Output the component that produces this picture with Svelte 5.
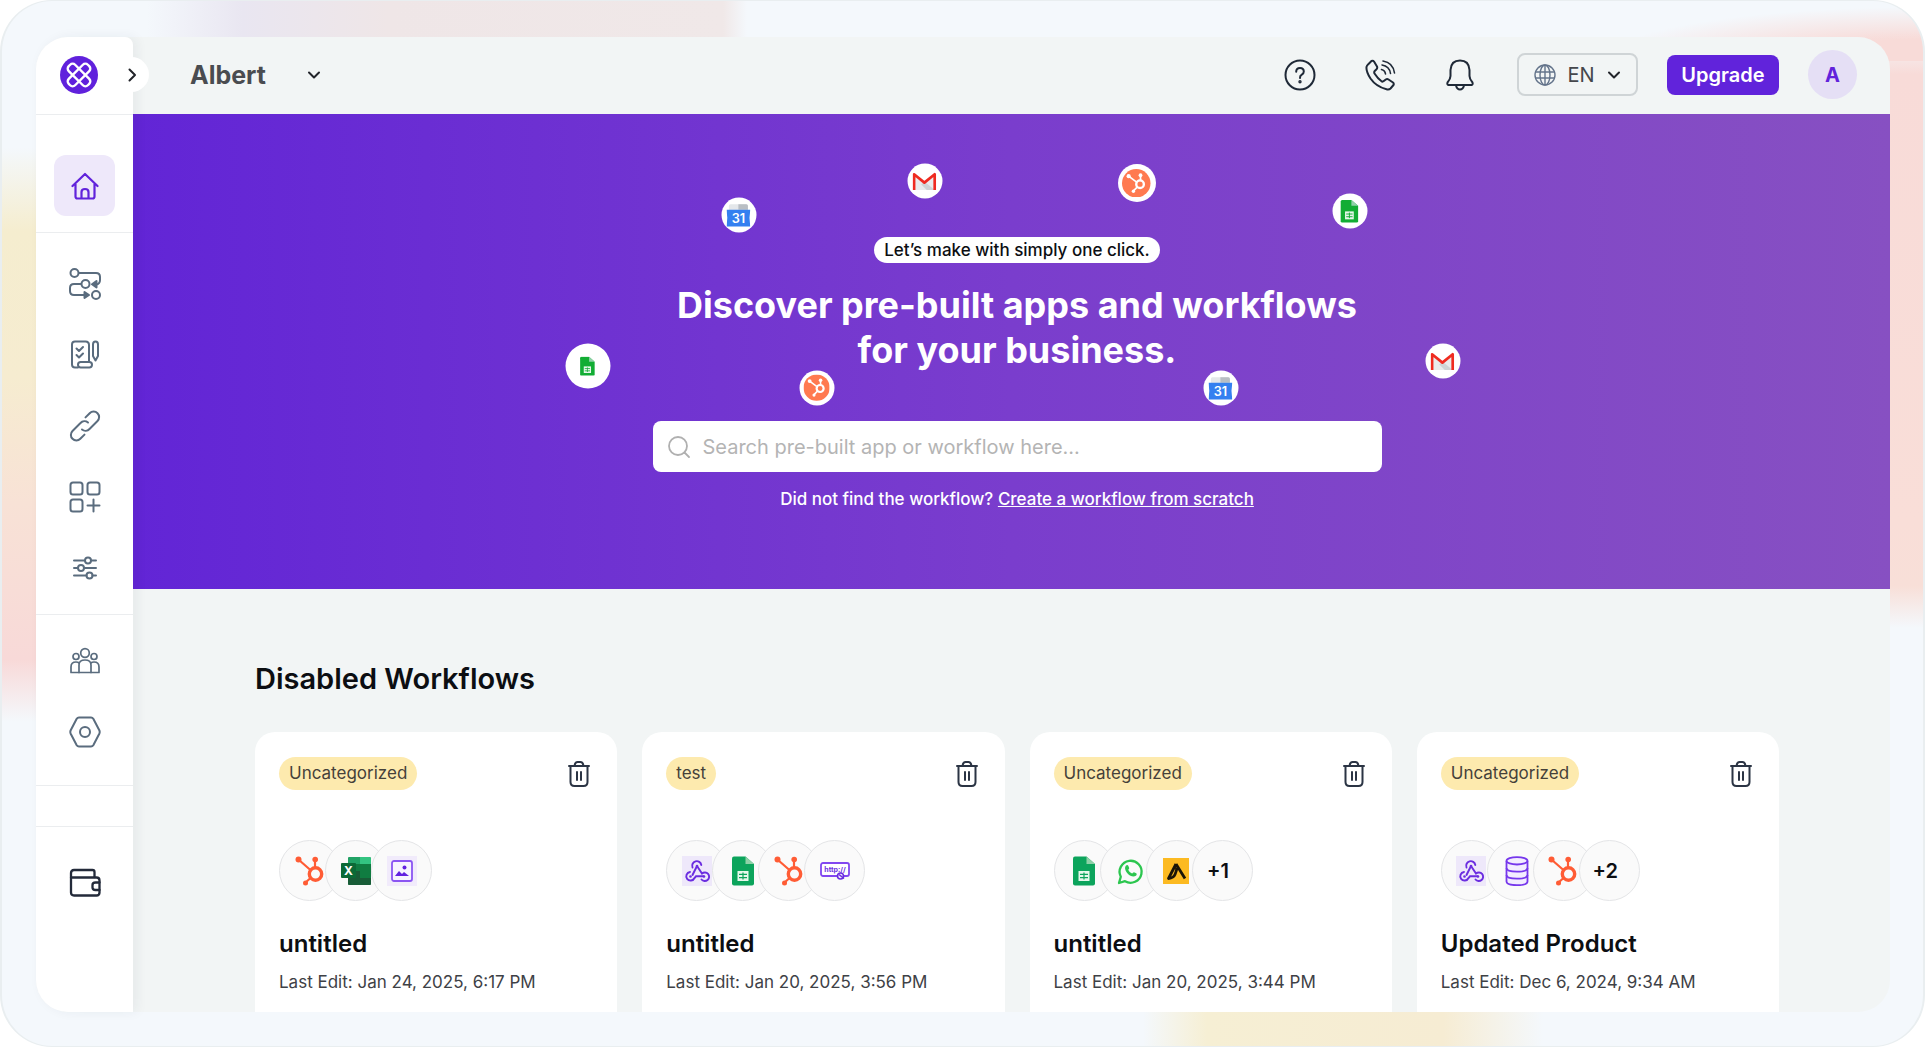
<script>
	const floating = [
		{ icon: 'calendar', x: -273, y: 101, size: 35 },
		{ icon: 'gmail', x: -87, y: 67, size: 35 },
		{ icon: 'hubspot-badge', x: 125, y: 69, size: 38 },
		{ icon: 'sheets', x: 338, y: 97, size: 35 },
		{ icon: 'sheets', x: -424, y: 252, size: 45 },
		{ icon: 'hubspot-badge', x: -195, y: 274, size: 35 },
		{ icon: 'calendar', x: 209, y: 274, size: 35 },
		{ icon: 'gmail', x: 431, y: 247, size: 35 },
	];

	const workflows = [
		{ tag: 'Uncategorized', apps: ['hubspot', 'excel', 'image'], more: 0, title: 'untitled', edited: 'Jan 24, 2025, 6:17 PM' },
		{ tag: 'test', apps: ['webhook', 'sheets-dark', 'hubspot', 'http'], more: 0, title: 'untitled', edited: 'Jan 20, 2025, 3:56 PM' },
		{ tag: 'Uncategorized', apps: ['sheets-dark', 'whatsapp', 'apollo'], more: 1, title: 'untitled', edited: 'Jan 20, 2025, 3:44 PM' },
		{ tag: 'Uncategorized', apps: ['webhook', 'database', 'hubspot'], more: 2, title: 'Updated Product', edited: 'Dec 6, 2024, 9:34 AM' },
	];

	const navGroups = [
		{ name: 'build', items: ['Workflows', 'Tasks', 'Connections', 'Apps', 'Settings'] },
		{ name: 'team', items: ['Team', 'Preferences'] },
		{ name: 'empty', items: [] },
		{ name: 'billing', items: ['Billing'] },
	];

	let query = $state('');
</script>

{#snippet chevron()}
	<svg class="chevron" viewBox="0 0 14 14" width="14" height="14" aria-hidden="true">
		<path d="M2 4.500l5 5 5-5" />
	</svg>
{/snippet}

{#snippet navIcon(name)}
	<svg class="nav-icon" viewBox="0 0 32 32" width="32" height="32" aria-hidden="true">
		{#if name === 'Workflows'}
			<circle cx="5.500" cy="5" r="4" />
			<path d="M10 5h17q4 0 4 4v3q0 4-4 4.500" />
			<path d="M27.500 13l-4.500 3.300 4.500 3.200z" fill="currentColor" />
			<circle cx="16.500" cy="16" r="4" />
			<path d="M12 16H5q-4 0-4 4v3q0 4 4 4h11" />
			<path d="M15.500 24l4.500 3-4.500 3z" fill="currentColor" />
			<circle cx="27" cy="27" r="4" />
		{:else if name === 'Tasks'}
			<path d="M9 28.500H6q-3 0-3-3V5.500q0-3 3-3h10.500q3.500 0 3.500 3.500v16.500" />
			<rect x="9" y="23" width="14" height="5.500" rx="2.700" />
			<path d="M7.500 9.500l2.500 2.500 4-4M7.500 16l2.500 2.500 4-4" />
			<path d="M24 5.500q0-3 2.500-3t2.500 3V17l-2.500 4.500L24 17z" />
		{:else if name === 'Connections'}
			<path d="M13 19.500a5.500 5.500 0 0 0 7.500-.500l8-8a5.500 5.500 0 0 0-7.800-7.800l-4.200 4.200" />
			<path d="M19 12.500a5.500 5.500 0 0 0-7.500.500l-8 8a5.500 5.500 0 0 0 7.800 7.800l4.200-4.200" />
		{:else if name === 'Apps'}
			<rect x="1.500" y="1.500" width="12" height="12" rx="2.500" />
			<rect x="18.500" y="1.500" width="12" height="12" rx="2.500" />
			<rect x="1.500" y="18.500" width="12" height="12" rx="2.500" />
			<path d="M24.500 18.500v12M18.500 24.500h12" />
		{:else if name === 'Settings'}
			<path d="M5 8.500h11M22 8.500h5M5 16h4M15 16h12M5 23.500h12.500M23.500 23.500h3.500" />
			<circle cx="19" cy="8.500" r="3" />
			<circle cx="12" cy="16" r="3" />
			<circle cx="20.500" cy="23.500" r="3" />
		{:else if name === 'Team'}
			<g stroke-width="1.700">
				<circle cx="16" cy="8" r="4.300" />
				<circle cx="7" cy="11.500" r="3" />
				<circle cx="25" cy="11.500" r="3" />
				<path d="M10 27.500V20q0-5 6-5t6 5v7.500z" />
				<path d="M10 27.500H2V22q0-5 5-5 2 0 3.200 1M22 27.500h8V22q0-5-5-5-2 0-3.200 1" />
			</g>
		{:else if name === 'Preferences'}
			<path d="M10 1.500h12q1.500 0 2.300 1.300l6 11.500q.800 1.700 0 3.400l-6 11.500q-.800 1.300-2.300 1.300H10q-1.500 0-2.300-1.300l-6-11.500q-.800-1.700 0-3.400l6-11.500Q8.500 1.500 10 1.500z" />
			<circle cx="16" cy="16" r="5" />
		{:else if name === 'Billing'}
			<g stroke-width="2.300">
				<path d="M2 10.500V6q0-3 3-3h18.500q2 0 2 2v5" />
				<path d="M2 10.500h25.500q3 0 3 3v12q0 3-3 3H5q-3 0-3-3z" />
				<path d="M30.500 15.500h-4q-3 0-3 2.500v2.500q0 2.500 3 2.500h4" />
			</g>
		{/if}
	</svg>
{/snippet}

{#snippet appIcon(name)}
	<svg viewBox="0 0 30 30" aria-hidden="true">
		{#if name === 'hubspot'}
			<g stroke="#ff5c35" fill="none">
				<path d="M4 4l12 10.500M20 4v9M15.500 22l-5.500 5" stroke-width="2.200" />
				<circle cx="20.500" cy="18" r="6.200" stroke-width="3.400" />
			</g>
			<g fill="#ff5c35">
				<circle cx="3.500" cy="3.500" r="3" />
				<circle cx="20.200" cy="3.500" r="2.800" />
				<circle cx="10.500" cy="27" r="2.500" />
			</g>
		{:else if name === 'hubspot-badge'}
			<circle cx="15" cy="15" r="15" fill="#ff7a50" />
			<g stroke="#fff" fill="none">
				<path d="M7 7.500l8 6M19.500 7v6M16 19l-4 4" stroke-width="1.800" />
				<circle cx="19" cy="16" r="4" stroke-width="2.500" />
			</g>
			<g fill="#fff">
				<circle cx="7" cy="7.500" r="2.200" />
				<circle cx="19.500" cy="6.500" r="2" />
				<circle cx="12" cy="23.500" r="1.800" />
			</g>
		{:else if name === 'excel'}
			<rect x="7" y="1" width="23" height="28" rx="1.500" fill="#107c41" />
			<path d="M19 1h9.500Q30 1 30 2.500V8H19z" fill="#33c481" />
			<path d="M7 8V2.500Q7 1 8.500 1H19v7z" fill="#21a366" />
			<path d="M7 15h12v7H7z" fill="#185c37" />
			<path d="M7 22h23v5.500q0 1.500-1.500 1.500h-20Q7 29 7 27.500z" fill="#185c37" />
			<rect x="0" y="7" width="15" height="15" rx="1" fill="#0b6a37" />
			<text x="7.500" y="19" text-anchor="middle" font-size="12" font-weight="700" fill="#fff">X</text>
		{:else if name === 'image'}
			<rect width="30" height="30" fill="#f1ebfb" />
			<rect x="5" y="5" width="20" height="20" rx="2" fill="#f7f3ff" stroke="#8b55f2" stroke-width="1.800" />
			<path d="M8 20l4-5 3 3 2-2 5 4z" fill="#6220e0" />
			<circle cx="17.500" cy="11.500" r="2" fill="#6220e0" />
		{:else if name === 'webhook'}
			<rect width="30" height="30" fill="#eee8fa" />
			<g fill="none" stroke="#6b2de0" stroke-width="1.900" stroke-linecap="round">
				<path d="M10.500 11.500a4.600 4.600 0 1 1 8.800-2.500M15 10l-4.500 9" />
				<path d="M15 10l5 7.500a4.300 4.300 0 1 1-.500 6" />
				<path d="M8 16a4.300 4.300 0 1 0 4.500 6l1.500-1.700h7.500" />
			</g>
			<g fill="#6b2de0">
				<circle cx="15" cy="10" r="1.300" />
				<circle cx="8.500" cy="20.500" r="1.300" />
				<circle cx="22" cy="20.500" r="1.300" />
			</g>
		{:else if name === 'http'}
			<rect x="1" y="7" width="28" height="13" rx="2" fill="#fff" stroke="#8147f0" stroke-width="1.800" />
			<text x="15" y="15.500" text-anchor="middle" font-size="7" font-weight="700" fill="#6b2de0">http://</text>
			<circle cx="20.500" cy="20" r="3" fill="#efe8fb" stroke="#6b2de0" stroke-width="1.600" />
			<path d="M19 18.500l5 4" stroke="#6b2de0" stroke-width="1.600" />
		{:else if name === 'sheets' || name === 'sheets-dark'}
			{@const fill = name === 'sheets' ? '#12ad34' : '#0ca45c'}
			<path d="M6 .500h11.500L26 8v19.500q0 2-2 2H6q-2 0-2-2v-25q0-2 2-2z" {fill} />
			<path d="M17.500.500L26 8h-8.500z" fill="#8fd1a8" />
			<rect x="9.500" y="15" width="11" height="10" fill="#e6f7eb" />
			<path d="M11 18.300h8M11 21.700h8M15 16.500v7" stroke={fill} stroke-width="1.200" />
		{:else if name === 'whatsapp'}
			<path d="M4 27l1.800-6.300A11 11 0 1 1 10 25.200z" fill="none" stroke="#2cc64f" stroke-width="2.300" stroke-linejoin="round" />
			<path d="M11 9.500c1-1 2-.600 2.400.400l.800 2c.200.600-.900 1.600-.900 1.800.700 1.700 2 3 3.800 3.700.400.100 1.300-1.400 1.900-1.200l2.200 1c.900.500.500 1.900-.300 2.500-2.400 1.700-5.700.400-8.100-2-2.200-2.200-3.800-6-1.800-8.200z" fill="#2cc64f" />
		{:else if name === 'apollo'}
			<rect x="2" y="2" width="26" height="26" fill="#fcba22" />
			<path d="M15 8l9 14.500M15 8L7.500 22.500q5-.500 6.500-4t2-7" fill="none" stroke="#1a1508" stroke-width="2.800" stroke-linejoin="round" />
		{:else if name === 'database'}
			<g fill="#f3edff" stroke="#7637ec" stroke-width="1.800">
				<path d="M4.500 5v20.500q0 3.700 10.500 3.700t10.500-3.700V5" />
				<ellipse cx="15" cy="4.800" rx="10.500" ry="3.700" />
				<path d="M4.500 12q0 3.700 10.500 3.700T25.500 12M4.500 19q0 3.700 10.500 3.700T25.500 19" fill="none" />
			</g>
		{:else if name === 'calendar'}
			<path d="M3 9V3q0-2 2-2h20q2 0 2 2v6z" fill="#e4e7ea" />
			<path d="M15 1h10q2 0 2 2v5H15z" fill="#b9bec4" />
			<path d="M0 8h30l-1 10 1 12H0l1-12z" fill="#3480f0" />
			<text x="15" y="24.500" text-anchor="middle" font-size="16" font-weight="600" fill="#fff">31</text>
		{:else if name === 'gmail'}
			<path d="M2 5l13 10L28 5v21H2z" fill="#e9ebec" />
			<path d="M15 15l13 11H18l-7-7z" fill="#cfd3d5" />
			<path d="M2 26V6l13 10.500L28 6v20" fill="none" stroke="#ef2b20" stroke-width="3.400" stroke-linejoin="round" />
		{/if}
	</svg>
{/snippet}

<div class="frame">
	<div class="panel">
		<aside class="sidebar">
			<a class="logo" href="#top" aria-label="Dashboard">
				<svg viewBox="0 0 38 38" width="38" height="38">
					<circle cx="19" cy="19" r="19" fill="#6021dc" />
					<g fill="none" stroke="#fff" stroke-width="2.400">
						<rect x="5.500" y="14.500" width="27" height="9" rx="3.500" transform="rotate(45 19 19)" />
						<rect x="5.500" y="14.500" width="27" height="9" rx="3.500" transform="rotate(-45 19 19)" />
					</g>
				</svg>
			</a>
			<button class="toggle" aria-label="Expand menu">
				<svg class="chevron" viewBox="0 0 14 14" width="14" height="14"><path d="M4.500 1.500L10 7l-5.500 5.500" /></svg>
			</button>

			<nav>
				<div class="group home-group">
					<a class="home" href="#home" aria-label="Home">
						<svg viewBox="0 0 28 28" width="28" height="28">
							<path d="M1.500 14L14 2l12.500 12M4.500 12v12.500q0 2 2 2h15q2 0 2-2V12M10.500 26.500V20q0-3 3.500-3t3.500 3v6.500" />
						</svg>
					</a>
				</div>
				{#each navGroups as group}
					<div class="group {group.name}">
						{#each group.items as item}
							<a class="nav-item" href="#{item.toLowerCase()}" aria-label={item}>{@render navIcon(item)}</a>
						{/each}
					</div>
				{/each}
			</nav>
		</aside>

		<div class="content">
			<header class="topbar">
				<label class="workspace">
					<select aria-label="Workspace"><option>Albert</option></select>
					{@render chevron()}
				</label>

				<div class="tools">
					<button class="tool" aria-label="Help">
						<svg viewBox="0 0 32 32" width="32" height="32">
							<circle cx="16" cy="16" r="14.500" />
							<path d="M12.200 12.800q0-3.800 3.800-3.800t3.800 3.500q0 2-2 3.200T16 19" />
							<circle cx="16" cy="22.700" r=".7" />
						</svg>
					</button>
					<button class="tool" aria-label="Call us">
						<svg viewBox="0 0 32 32" width="32" height="32">
							<path d="M4 5.500L7.500 2q1.500-.800 2.500.500l3 5q.700 1.500-.500 2.800l-2 2q-.700 1.200.200 2.500 3.200 5 6.800 7.500 1.200.700 2.300-.200l2-1.600q1.300-.900 2.700 0l4.500 3q1.200 1 .500 2.500l-3 3.500q-1.500 1.500-4 .800Q12 27.500 6.500 19.500 2 12.500 2.500 8q.300-1.500 1.500-2.500z" />
							<path d="M17.500 10.500q3.500.800 4 4.500M18 6q7.500 1.200 8.500 8.500M19 2q10 1.500 11.500 12" stroke-width="1.600" />
						</svg>
					</button>
					<button class="tool" aria-label="Notifications">
						<svg viewBox="0 0 32 32" width="32" height="32">
							<path d="M16 1.500q9 0 9.500 9.500v6q0 3 3 6.500.700 2-1 2.500h-23q-1.700-.500-1-2.500 3-3.500 3-6.500v-6q.500-9.500 9.500-9.500z" />
							<path d="M12 26.500q1 4 4 4t4-4" />
						</svg>
					</button>
				</div>

				<label class="language">
					<svg class="globe" viewBox="0 0 22 22" width="22" height="22" aria-hidden="true">
						<circle cx="11" cy="11" r="10" />
						<ellipse cx="11" cy="11" rx="5" ry="10" />
						<path d="M11 1v20M1.500 8h19M1.500 14h19" />
					</svg>
					<select aria-label="Language"><option>EN</option></select>
					{@render chevron()}
				</label>
				<button class="upgrade">Upgrade</button>
				<button class="avatar" aria-label="Account">A</button>
			</header>

			<section class="hero">
				{#each floating as app}
					<span
						class="bubble"
						style:left="calc(50% + {app.x}px)"
						style:top="{app.y}px"
						style:width="{app.size}px"
						style:height="{app.size}px"
						class:badge={app.icon === 'hubspot-badge'}
						class:roomy={app.size > 40}
					>{@render appIcon(app.icon)}</span>
				{/each}

				<p class="pill">Let’s make with simply one click.</p>
				<h1>Discover pre-built apps and workflows<br />for your business.</h1>
				<label class="search">
					<svg viewBox="0 0 24 24" width="24" height="24" aria-hidden="true">
						<circle cx="11" cy="11" r="9" />
						<path d="M17.500 17.500L22 22" />
					</svg>
					<input type="text" aria-label="Search" placeholder="Search pre-built app or workflow here..." bind:value={query} />
				</label>
				<p class="hint">Did not find the workflow? <a href="#new">Create a workflow from scratch</a></p>
			</section>

			<section class="disabled">
				<h2>Disabled Workflows</h2>
				<div class="cards">
					{#each workflows as flow}
						<article class="card">
							<div class="card-head">
								<span class="tag">{flow.tag}</span>
								<button class="trash" aria-label="Delete workflow">
									<svg viewBox="0 0 22 28" width="22" height="28">
										<path d="M1 6h20M6.500 6q.500-4 3-4h3q2.500 0 3 4M2.500 6v16q0 4 4 4h9q4 0 4-4V6M9 12v8M13 12v8" />
									</svg>
								</button>
							</div>
							<div class="apps">
								{#each flow.apps as app}
									<span class="app">{@render appIcon(app)}</span>
								{/each}
								{#if flow.more}
									<span class="app more">+{flow.more}</span>
								{/if}
							</div>
							<h3>{flow.title}</h3>
							<p class="edited">Last Edit: {flow.edited}</p>
						</article>
					{/each}
				</div>
			</section>
		</div>
	</div>
</div>

<style>
	:global(body) {
		background: #fff;
	}

	* {
		box-sizing: border-box;
	}

	.frame {
		--purple: #6123db;
		--line: #ebedef;
		display: flex;
		min-height: 100vh;
		padding: 36px 33px 34px 34px;
		border: solid #e9eef0;
		border-width: 1px 2px;
		border-radius: 52px;
		font-family: Inter, "Liberation Sans", sans-serif;
		color: #0c0e12;
		background:
			linear-gradient(180deg, transparent 14%, #f5edcf 22%, #f6ecd0 36%, #f8e2d6 48%, #f8d9d8 63%, transparent 69%) left top / 60px 100% no-repeat,
			linear-gradient(180deg, transparent 3%, #f8dbd8 7%, #f9ded8 50%, #f8dfd8 56%, transparent 60%) right top / 60px 100% no-repeat,
			radial-gradient(320px 54px at 100% 100%, #f8dbd8 40%, transparent) right top / 360px 60px no-repeat,
			linear-gradient(90deg, transparent, #e9e6f1 16%, #efe6e7 40%, #f0e8e8 96%, transparent) 11% top / 600px 60px no-repeat,
			linear-gradient(90deg, transparent, #f6efd4 16%, #f6ecd3 75%, transparent) 75% bottom / 400px 60px no-repeat,
			#f4f8fc;
	}

	.panel {
		display: flex;
		flex: 1;
		min-width: 0;
		border-radius: 32px;
		background: #f2f5f5;
	}

	.sidebar {
		position: relative;
		z-index: 1;
		flex: none;
		width: 97px;
		border-radius: 32px 8px 0 32px;
		background: #fff;
		box-shadow: 4px 0 12px rgba(30, 50, 60, 0.06);
	}

	.logo {
		display: flex;
		align-items: center;
		height: 78px;
		padding: 0 0 2px 24px;
		border-bottom: 1px solid var(--line);
	}

	.toggle {
		position: absolute;
		top: 20px;
		right: -16px;
		display: grid;
		place-items: center;
		width: 35px;
		height: 35px;
		padding: 0;
		border: 0;
		border-radius: 50%;
		background: #fff;
	}

	.chevron {
		fill: none;
		stroke: #22242a;
		stroke-width: 2;
		stroke-linecap: round;
		stroke-linejoin: round;
	}

	.group {
		display: flex;
		flex-direction: column;
		align-items: center;
		border-bottom: 1px solid var(--line);
	}

	.home-group {
		padding: 40px 0 16px;
	}

	.build {
		padding: 15px 0 11px;
	}

	.team {
		padding: 10px 0 18px;
	}

	.empty {
		height: 41px;
	}

	.billing {
		padding-top: 20px;
		border-bottom: 0;
		color: #232a3a;
	}

	.home {
		display: grid;
		place-items: center;
		width: 61px;
		height: 61px;
		border-radius: 12px;
		background: #eee8fa;
	}

	.home svg {
		fill: none;
		stroke: var(--purple);
		stroke-width: 2.2;
		stroke-linecap: round;
		stroke-linejoin: round;
	}

	.nav-item {
		display: grid;
		place-items: center;
		width: 61px;
		height: 71px;
		color: #5a6c7e;
	}

	.billing .nav-item {
		color: inherit;
	}

	.nav-icon {
		fill: none;
		stroke: currentColor;
		stroke-width: 2;
		stroke-linecap: round;
		stroke-linejoin: round;
	}

	.content {
		display: flex;
		flex: 1;
		flex-direction: column;
		min-width: 0;
	}

	.topbar {
		display: flex;
		align-items: center;
		height: 77px;
		padding: 0 33px 2px 57px;
	}

	select {
		padding: 0;
		border: 0;
		font: inherit;
		color: inherit;
		background: transparent;
		appearance: none;
	}

	.workspace {
		display: flex;
		align-items: center;
		justify-content: space-between;
		width: 131px;
		margin-right: auto;
		font-size: 25px;
		font-weight: 700;
		color: #4a4c50;
	}

	.tools {
		display: flex;
		gap: 48px;
		margin-right: 41px;
	}

	.tool {
		display: grid;
		padding: 0;
		border: 0;
		background: none;
	}

	.tool svg {
		fill: none;
		stroke: #1f2937;
		stroke-width: 2;
		stroke-linecap: round;
		stroke-linejoin: round;
	}

	.language {
		display: flex;
		align-items: center;
		justify-content: space-between;
		width: 121px;
		height: 43px;
		margin-right: 29px;
		padding: 0 15px;
		border: 2px solid #cfd4d6;
		border-radius: 8px;
		font-size: 20px;
		color: #45474c;
	}

	.globe {
		fill: none;
		stroke: #64748b;
		stroke-width: 1.4;
	}

	.upgrade {
		width: 112px;
		height: 40px;
		margin-right: 29px;
		padding: 0;
		border: 0;
		border-radius: 8px;
		font: 600 20px Inter, sans-serif;
		color: #fff;
		background: var(--purple);
	}

	.avatar {
		width: 49px;
		height: 49px;
		padding: 0;
		border: 0;
		border-radius: 50%;
		font: 700 20px Inter, sans-serif;
		color: var(--purple);
		background: #e5dff5;
	}

	.hero {
		position: relative;
		display: flex;
		flex-direction: column;
		align-items: center;
		padding: 123px 0 78px 11px;
		color: #fff;
		background: linear-gradient(90deg, #6225d6, #7a3dcd 50%, #8750c2);
	}

	.bubble {
		position: absolute;
		display: grid;
		place-items: center;
		border-radius: 50%;
		background: #fff;
		transform: translate(-50%, -50%);
	}

	.bubble svg {
		width: 68%;
	}

	.bubble.badge svg {
		width: 75%;
	}

	.bubble.roomy svg {
		width: 44%;
	}

	p,
	h1,
	h2,
	h3 {
		margin: 0;
	}

	.pill {
		padding: 0 10px;
		border-radius: 13px;
		font-size: 17px;
		font-weight: 500;
		line-height: 26px;
		color: #0c0e12;
		background: #fff;
	}

	h1 {
		margin-top: 20px;
		font-size: 36px;
		font-weight: 700;
		line-height: 45px;
		text-align: center;
	}

	.search {
		display: flex;
		align-items: center;
		gap: 12px;
		width: 100%;
		max-width: 729px;
		height: 51px;
		margin-top: 48px;
		padding: 0 14px;
		border-radius: 8px;
		background: #fff;
	}

	.search svg {
		fill: none;
		stroke: #b0b0b0;
		stroke-width: 1.8;
		stroke-linecap: round;
	}

	.search input {
		flex: 1;
		padding: 0;
		border: 0;
		outline: 0;
		font: 400 20px Inter, sans-serif;
		background: none;
	}

	.search input::placeholder {
		color: #b4b4b4;
	}

	.hint {
		margin-top: 15px;
		font-size: 17px;
		font-weight: 500;
		line-height: 24px;
	}

	.hint a {
		color: inherit;
	}

	.disabled {
		display: flex;
		flex: 1;
		flex-direction: column;
		padding: 72px 111px 0 122px;
	}

	h2 {
		font-size: 29px;
		font-weight: 600;
		line-height: 36px;
	}

	.cards {
		display: grid;
		flex: 1;
		grid-template-columns: repeat(4, 1fr);
		gap: 25px;
		margin-top: 35px;
	}

	.card {
		padding: 25px 24px 18px;
		border-radius: 20px 20px 0 0;
		background: #fff;
	}

	.card-head {
		display: flex;
		align-items: center;
		justify-content: space-between;
	}

	.tag {
		padding: 0 10px;
		border-radius: 17px;
		font-size: 17px;
		line-height: 33px;
		color: #45413a;
		background: #fdeaae;
	}

	.trash {
		display: grid;
		margin-right: 3px;
		padding: 0;
		border: 0;
		background: none;
	}

	.trash svg {
		fill: none;
		stroke: #2b3444;
		stroke-width: 2;
		stroke-linecap: round;
	}

	.apps {
		display: flex;
		margin-top: 50px;
	}

	.app {
		display: grid;
		place-items: center;
		width: 61px;
		height: 61px;
		border: 1px solid #e4e5e7;
		border-radius: 50%;
		background: #fafafa;
	}

	.app + .app {
		margin-left: -15px;
	}

	.app svg {
		width: 30px;
	}

	.more {
		padding-right: 8px;
		font-size: 20px;
		font-weight: 600;
	}

	h3 {
		margin-top: 28px;
		font-size: 24px;
		font-weight: 600;
		line-height: 30px;
	}

	.edited {
		margin-top: 11px;
		font-size: 17px;
		line-height: 24px;
		color: #3e4146;
	}
</style>
